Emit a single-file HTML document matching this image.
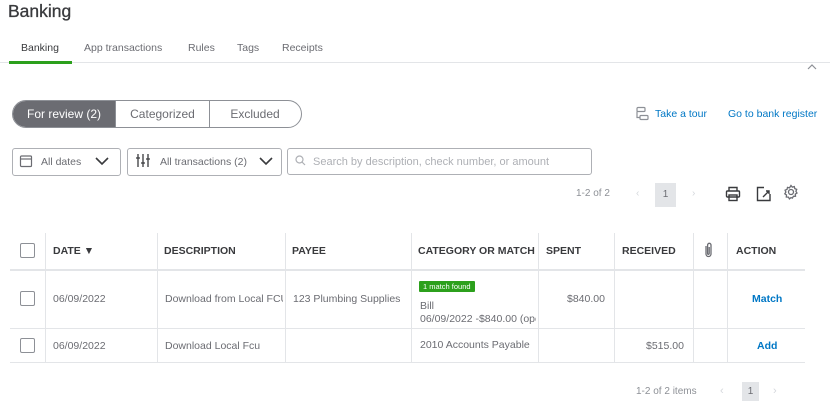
<!DOCTYPE html><html><head><style>
body{margin:0;width:830px;height:415px;background:#fff;font-family:"Liberation Sans",sans-serif;position:relative;overflow:hidden;color:#393a3d}
.a{position:absolute;white-space:nowrap}
.t{font-size:10.5px;color:#6b6c72}
.h{font-size:10.5px;font-weight:bold;color:#393a3d}
.c{font-size:10.5px;color:#6b6c72}
.vl{position:absolute;width:1px;background:#e3e5e8}
.hl{position:absolute;height:1px;background:#e3e5e8;left:10px;width:795px}
.cb{position:absolute;width:13px;height:13px;border:1px solid #8d9096;border-radius:2px;background:#fff}
.box{position:absolute;border:1px solid #aeb0b5;border-radius:3px}
</style></head><body>
<div class="a" style="left:8px;top:1px;font-size:17.5px;color:#393a3d;-webkit-text-stroke:0.3px #393a3d">Banking</div>
<div class="a t" style="left:21px;top:42px;color:#393a3d">Banking</div>
<div class="a t" style="left:84px;top:42px">App transactions</div>
<div class="a t" style="left:188px;top:42px">Rules</div>
<div class="a t" style="left:237px;top:42px">Tags</div>
<div class="a t" style="left:282px;top:42px">Receipts</div>
<div style="position:absolute;left:0;top:62px;width:830px;height:1px;background:#e3e5e8"></div>
<div style="position:absolute;left:9px;top:61px;width:63px;height:3px;background:#2ca01c"></div>
<svg class="a" style="left:807px;top:63px" width="10" height="7" viewBox="0 0 10 7" fill="none" stroke="#8d9096" stroke-width="1.2"><path d="M1 6l4-4 4 4"/></svg>

<div style="position:absolute;left:12px;top:100px;width:288px;height:26px;border:1px solid #8d9096;border-radius:14px;overflow:hidden">
<div style="position:absolute;left:0;top:0;width:102px;height:26px;background:#6b6c72;color:#fff;font-size:12px;line-height:26px;text-align:center">For review (2)</div>
<div style="position:absolute;left:102px;top:0;width:93px;height:26px;border-left:1px solid #8d9096;border-right:1px solid #8d9096;font-size:12px;line-height:26px;text-align:center;color:#6b6c72">Categorized</div>
<div style="position:absolute;left:196px;top:0;width:92px;height:26px;font-size:12px;line-height:26px;text-align:center;color:#6b6c72">Excluded</div>
</div>
<svg class="a" style="left:635px;top:106px" width="16" height="16" viewBox="0 0 16 16" fill="none" stroke="#8d9096" stroke-width="1.2"><rect x="2" y="1.5" width="8" height="4" rx="1"/><rect x="5" y="9.5" width="8" height="4" rx="1"/><path d="M2 5.5v6h3"/></svg>
<div class="a" style="left:655px;top:108px;font-size:10.5px;color:#0077c5">Take a tour</div>
<div class="a" style="left:728px;top:108px;font-size:10.5px;color:#0077c5">Go to bank register</div>

<div class="box" style="left:12px;top:148px;width:107px;height:26px"></div>
<svg class="a" style="left:19px;top:154px" width="14" height="14" viewBox="0 0 14 14" fill="none" stroke="#6b6c72" stroke-width="1.2"><rect x="1.5" y="2" width="11" height="10.5" rx="1"/><path d="M1.5 5h11"/></svg>
<div class="a t" style="left:41px;top:156px;color:#6b6c72">All dates</div>
<svg class="a" style="left:95px;top:157px" width="14" height="9" viewBox="0 0 14 9" fill="none" stroke="#393a3d" stroke-width="1.6"><path d="M1 1l6 6 6-6"/></svg>
<div class="box" style="left:127px;top:148px;width:153px;height:26px"></div>
<svg class="a" style="left:135px;top:153px" width="16" height="15" viewBox="0 0 16 15" fill="none" stroke="#393a3d" stroke-width="1.3"><path d="M3 1v13M8 1v13M13 1v13"/><path d="M1 5h4M6 10h4M11 6h4"/></svg>
<div class="a t" style="left:160px;top:156px;color:#6b6c72">All transactions (2)</div>
<svg class="a" style="left:259px;top:157px" width="14" height="9" viewBox="0 0 14 9" fill="none" stroke="#393a3d" stroke-width="1.6"><path d="M1 1l6 6 6-6"/></svg>
<div class="box" style="left:287px;top:148px;width:303px;height:25px"></div>
<svg class="a" style="left:295px;top:155px" width="11" height="11" viewBox="0 0 11 11" fill="none" stroke="#aeb0b5" stroke-width="1.2"><circle cx="4.5" cy="4.5" r="3.5"/><path d="M7 7l3 3"/></svg>
<div class="a t" style="left:313px;top:156px;color:#aeb0b5;font-size:11px">Search by description, check number, or amount</div>

<div class="a t" style="left:576px;top:188px;font-size:10px;color:#8d9096">1-2 of 2</div>
<div class="a" style="left:636px;top:188px;font-size:10px;color:#d4d7dc">&#8249;</div>
<div class="a" style="left:655px;top:183px;width:21px;height:24px;background:#e3e5e8;font-size:10px;line-height:24px;text-align:center;color:#6b6c72">1</div>
<div class="a" style="left:692px;top:188px;font-size:10px;color:#d4d7dc">&#8250;</div>
<svg class="a" style="left:725px;top:186px" width="16" height="16" viewBox="0 0 16 16" fill="none" stroke="#393a3d" stroke-width="1.4"><path d="M4 5V1.5h8V5"/><rect x="1.5" y="5" width="13" height="6" rx="1"/><rect x="4" y="9" width="8" height="5.5"/></svg>
<svg class="a" style="left:756px;top:186px" width="16" height="16" viewBox="0 0 16 16" fill="none" stroke="#393a3d" stroke-width="1.4"><path d="M14 8v6.5H1.5V1.5H8"/><path d="M7 11l6-6M10 5h3v3"/></svg>
<svg class="a" style="left:783px;top:184px" width="16" height="16" viewBox="0 0 16 16" fill="none" stroke="#6b6c72" stroke-width="1.3"><circle cx="8" cy="8" r="2.5"/><path d="M8 1.5l1.3 1.6 2-.5.5 2 1.9.8-.8 1.9 1.1 1.7-1.7 1.1.2 2.1-2.1.1-1 1.8L8 13.6l-1.6 1.3-1-1.8-2.1-.1.2-2.1-1.7-1.1 1.1-1.7-.8-1.9 1.9-.8.5-2 2 .5z"/></svg>

<div class="vl" style="left:45px;top:233px;height:129px"></div>
<div class="vl" style="left:157px;top:233px;height:129px"></div>
<div class="vl" style="left:285px;top:233px;height:129px"></div>
<div class="vl" style="left:411px;top:233px;height:129px"></div>
<div class="vl" style="left:538px;top:233px;height:129px"></div>
<div class="vl" style="left:614px;top:233px;height:129px"></div>
<div class="vl" style="left:693px;top:233px;height:129px"></div>
<div class="vl" style="left:727px;top:233px;height:129px"></div>
<div class="hl" style="top:269px;height:2px"></div>
<div class="hl" style="top:328px"></div>
<div class="hl" style="top:362px"></div>

<div class="cb" style="left:20px;top:243px"></div>
<div class="a h" style="left:53px;top:245px">DATE &#9660;</div>
<div class="a h" style="left:164px;top:245px">DESCRIPTION</div>
<div class="a h" style="left:292px;top:245px">PAYEE</div>
<div class="a h" style="left:418px;top:245px">CATEGORY OR MATCH</div>
<div class="a h" style="left:546px;top:245px">SPENT</div>
<div class="a h" style="left:622px;top:245px">RECEIVED</div>
<svg class="a" style="left:704px;top:242px" width="9" height="16" viewBox="0 0 9 16" fill="none" stroke="#6b6c72" stroke-width="1.3"><path d="M2 4v8a2.5 2.5 0 005 0V3a1.7 1.7 0 00-3.4 0v8.5a.8.8 0 001.6 0V5"/></svg>
<div class="a h" style="left:736px;top:245px">ACTION</div>

<div class="cb" style="left:20px;top:291px"></div>
<div class="a c" style="left:53px;top:293px">06/09/2022</div>
<div class="a c" style="left:165px;top:293px;width:118px;overflow:hidden">Download from Local FCU</div>
<div class="a c" style="left:293px;top:293px">123 Plumbing Supplies</div>
<div class="a" style="left:419px;top:281px;background:#2ca01c;color:#fff;font-size:7.5px;padding:1px 4px;border-radius:1px">1 match found</div>
<div class="a c" style="left:420px;top:300px">Bill</div>
<div class="a c" style="left:420px;top:313px;width:116px;overflow:hidden">06/09/2022 -$840.00 (open)</div>
<div class="a c" style="left:567px;top:293px">$840.00</div>
<div class="a" style="left:752px;top:293px;font-size:10.5px;font-weight:bold;color:#0077c5">Match</div>

<div class="cb" style="left:20px;top:338px"></div>
<div class="a c" style="left:53px;top:340px">06/09/2022</div>
<div class="a c" style="left:165px;top:340px">Download Local Fcu</div>
<div class="a c" style="left:420px;top:339px">2010 Accounts Payable</div>
<div class="a c" style="left:646px;top:340px">$515.00</div>
<div class="a" style="left:757px;top:340px;font-size:10.5px;font-weight:bold;color:#0077c5">Add</div>

<div class="a" style="left:636px;top:386px;font-size:10px;color:#8d9096">1-2 of 2 items</div>
<div class="a" style="left:720px;top:385px;font-size:11px;color:#d4d7dc">&#8249;</div>
<div class="a" style="left:742px;top:382px;width:17px;height:19px;background:#e3e5e8;font-size:10px;line-height:19px;text-align:center;color:#6b6c72">1</div>
<div class="a" style="left:773px;top:385px;font-size:11px;color:#d4d7dc">&#8250;</div>
</body></html>
